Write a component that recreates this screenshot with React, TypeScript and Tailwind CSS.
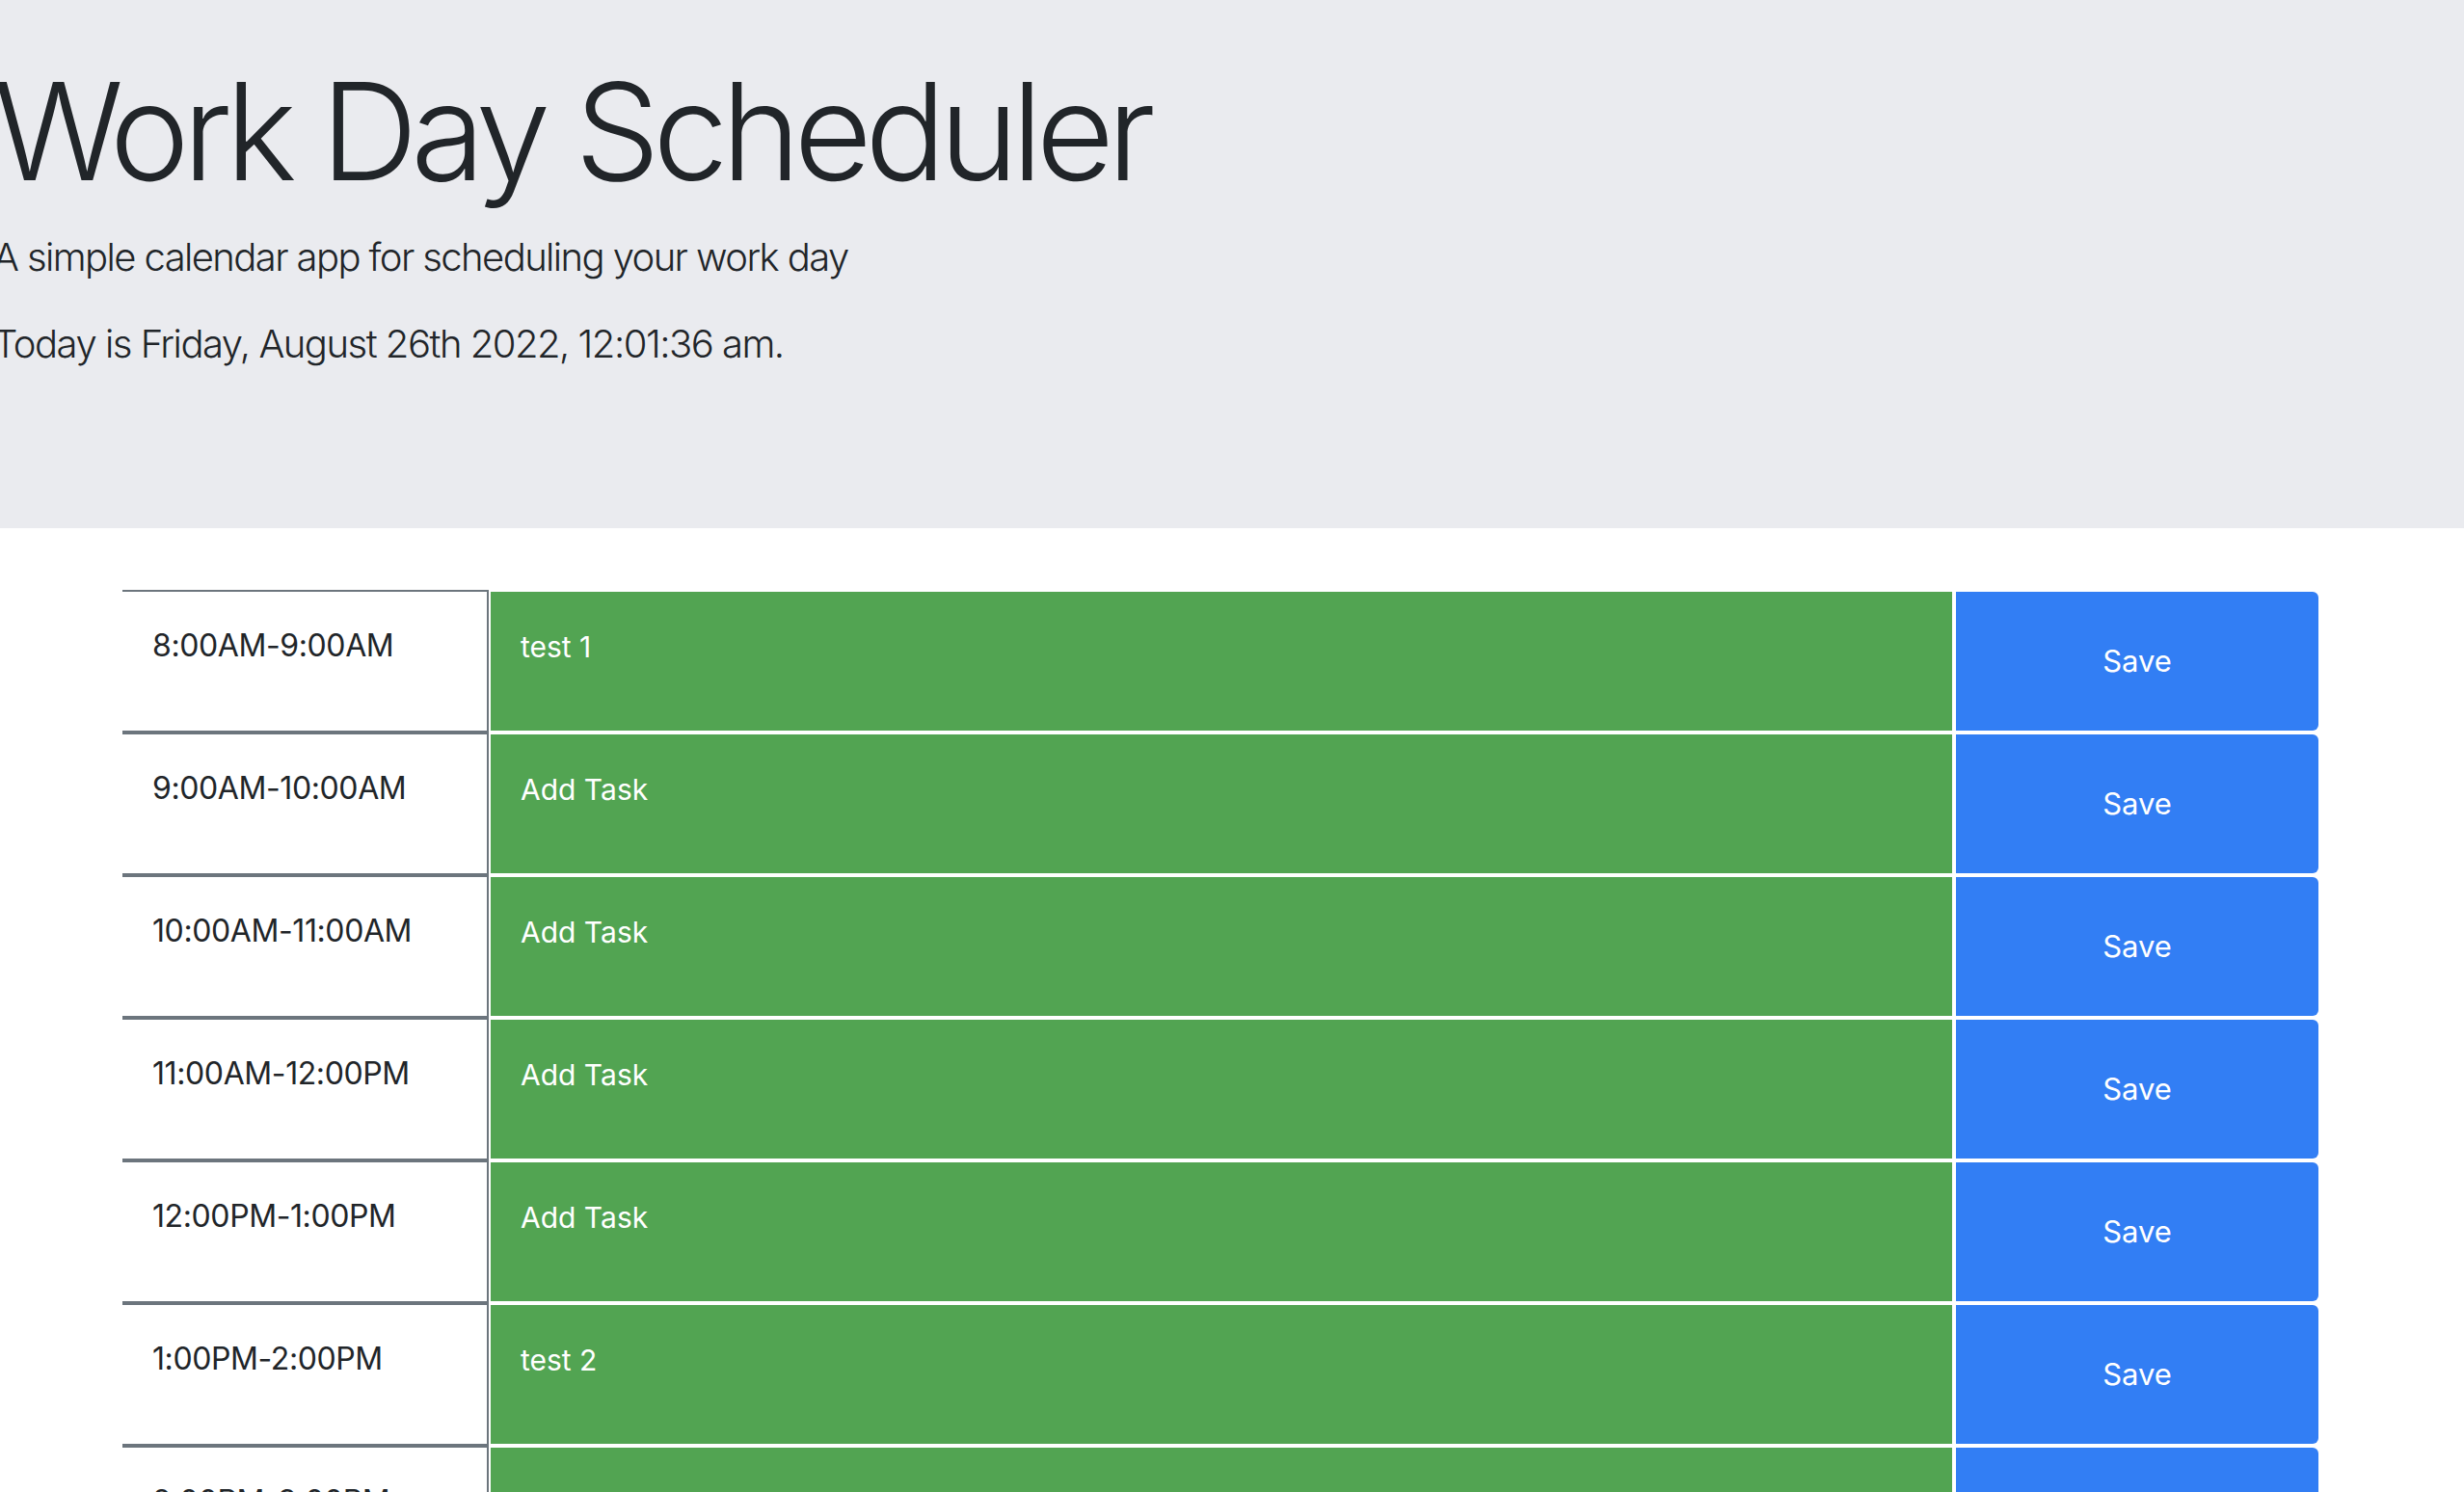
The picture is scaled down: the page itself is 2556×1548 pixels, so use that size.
import React from "react";

const rows = [
  { time: "8:00AM-9:00AM", task: "test 1" },
  { time: "9:00AM-10:00AM", task: "Add Task" },
  { time: "10:00AM-11:00AM", task: "Add Task" },
  { time: "11:00AM-12:00PM", task: "Add Task" },
  { time: "12:00PM-1:00PM", task: "Add Task" },
  { time: "1:00PM-2:00PM", task: "test 2" },
  { time: "2:00PM-3:00PM", task: "Add Task" },
  { time: "3:00PM-4:00PM", task: "Add Task" },
  { time: "4:00PM-5:00PM", task: "Add Task" },
];

export default function App() {
  return (
    <div className="min-h-screen w-full bg-white text-[#212529] overflow-hidden" style={{ fontFamily: "Inter, 'Noto Sans', sans-serif" }}>
      <header className="bg-[#eaebef] h-[548px] pt-[66px] -ml-[7px]">
        <h1 className="text-[140px] leading-none font-light tracking-[-7.3px] whitespace-nowrap">Work Day Scheduler</h1>
        <p className="mt-[41px] text-[40px] leading-none font-light tracking-[-1.6px] whitespace-nowrap">A simple calendar app for scheduling your work day</p>
        <p className="mt-[50px] text-[40px] leading-none font-light tracking-[-1.5px] whitespace-nowrap">Today is Friday, August 26th 2022, 12:01:36 am.</p>
      </header>
      <main className="pt-[64px] pl-[127px] flex flex-col">
        {rows.map((r, i) => (
          <div key={i} className="flex h-[148px]">
            <div className="w-[380px] border-t-2 border-b-2 border-r-2 border-[#6c757d] pl-[31px] pt-[40px]">
              <span className="block text-[32px] leading-none tracking-[-0.4px] whitespace-nowrap">{r.time}</span>
            </div>
            <div className="ml-[2px] my-[2px] w-[1516px] bg-[#52a452] pl-[31px] pt-[42px]">
              <span className="block text-[30px] leading-none text-white">{r.task}</span>
            </div>
            <button className="ml-[4px] my-[2px] w-[376px] bg-[#327ef4] rounded-r-[6px] flex items-center justify-center pb-[2px] text-white text-[31px] leading-none">
              Save
            </button>
          </div>
        ))}
      </main>
    </div>
  );
}
